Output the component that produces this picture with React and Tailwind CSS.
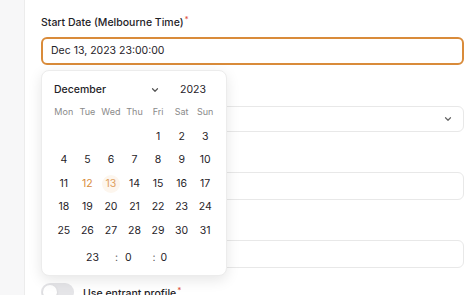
import React from "react";

const WEEKDAYS = ["Mon", "Tue", "Wed", "Thu", "Fri", "Sat", "Sun"];

// December 2023 starts on a Friday
const DAYS = [null, null, null, null, ...Array.from({ length: 31 }, (_, i) => i + 1)];

const Chevron = ({ className }) => (
  <svg viewBox="0 0 12 12" className={className} fill="none" stroke="currentColor" strokeWidth="1.2" strokeLinecap="round" strokeLinejoin="round">
    <path d="M3.5 4.75 6 7.25 8.5 4.75" />
  </svg>
);

const Label = ({ children, required }) => (
  <div className="h-4 text-[10.5px] leading-4 font-medium text-[#1f2328]">
    {children}
    {required && <sup className="ml-[1px] text-[8px] text-[#e0533c]">*</sup>}
  </div>
);

const Calendar = () => (
  <div className="absolute left-0 top-[55px] z-10 w-[186px] h-[206px] rounded-lg border border-[#ececec] bg-white shadow-[0_4px_14px_rgba(0,0,0,0.10)] px-[10px] pt-[7px]">
    <div className="flex h-6 items-center text-[10.5px] font-medium text-[#1f2328]">
      <span className="ml-[2px]">December</span>
      <Chevron className="ml-[43px] h-3 w-3 text-[#555]" />
      <span className="ml-[19px] font-normal">2023</span>
    </div>
    <div className="grid h-5 w-[165px] grid-cols-7 items-center text-[9px] text-[#8a8a8a] mb-[3px]">
      {WEEKDAYS.map((d) => (
        <div key={d} className="text-center">{d}</div>
      ))}
    </div>
    <div className="grid w-[165px] grid-cols-7 text-[10.5px] text-[#1f2328]">
      {DAYS.map((d, i) => (
        <div key={i} className="flex h-[23.5px] items-center justify-center">
          {d === 12 && <span className="text-[#d98b3a]">12</span>}
          {d === 13 && (
            <span className="flex h-[18px] w-[18px] items-center justify-center rounded-full bg-[#fdf6ee] text-[#e0a060]">13</span>
          )}
          {d && d !== 12 && d !== 13 && d}
        </div>
      ))}
    </div>
    <div className="mt-[3px] flex h-6 items-center pl-[34px] text-[10.5px] text-[#1f2328]">
      <span>23</span>
      <span className="ml-[16px] text-[#555]">:</span>
      <span className="ml-[7px]">0</span>
      <span className="ml-[21px] text-[#555]">:</span>
      <span className="ml-[5px]">0</span>
    </div>
  </div>
);

export default function App() {
  return (
    <div className="flex h-[295px] w-full overflow-hidden bg-white font-['Inter',sans-serif]">
      <div className="w-[25px] shrink-0 border-r border-[#ececec] bg-[#f7f7f8]" />
      <div className="relative flex-1 pl-[16px] pr-[10px] pt-[15px]">
        <div className="relative">
          <Label required>Start Date (Melbourne Time)</Label>
          <div className="mt-[6px] flex h-[28px] items-center rounded-md border-2 border-[#d98b3a] px-[8px] text-[10.5px] text-[#1f2328]">
            Dec 13, 2023 23:00:00
          </div>
          <Calendar />
        </div>

        {/* labels of these fields sit under the open calendar */}
        <div className="mt-[19px]">
          <div className="h-4" />
          <div className="mt-[6px] flex h-[26px] items-center justify-end rounded-md border border-[#e8e8e8] px-[9px]">
            <Chevron className="h-3 w-3 text-[#666]" />
          </div>
        </div>

        <div className="mt-[18px]">
          <div className="h-4" />
          <div className="mt-[6px] h-[28px] rounded-md border border-[#e8e8e8]" />
        </div>

        <div className="mt-[18px]">
          <div className="h-4" />
          <div className="mt-[6px] h-[28px] rounded-md border border-[#e8e8e8]" />
        </div>

        <div className="mt-[15px] flex items-start gap-[9px]">
          <div className="flex h-[18px] w-[33px] items-center rounded-full bg-[#e5e5e8] p-[2px]">
            <div className="h-[14px] w-[14px] rounded-full bg-white shadow-sm" />
          </div>
          <div className="mt-[3px]">
            <Label required>Use entrant profile</Label>
          </div>
        </div>
      </div>
    </div>
  );
}
